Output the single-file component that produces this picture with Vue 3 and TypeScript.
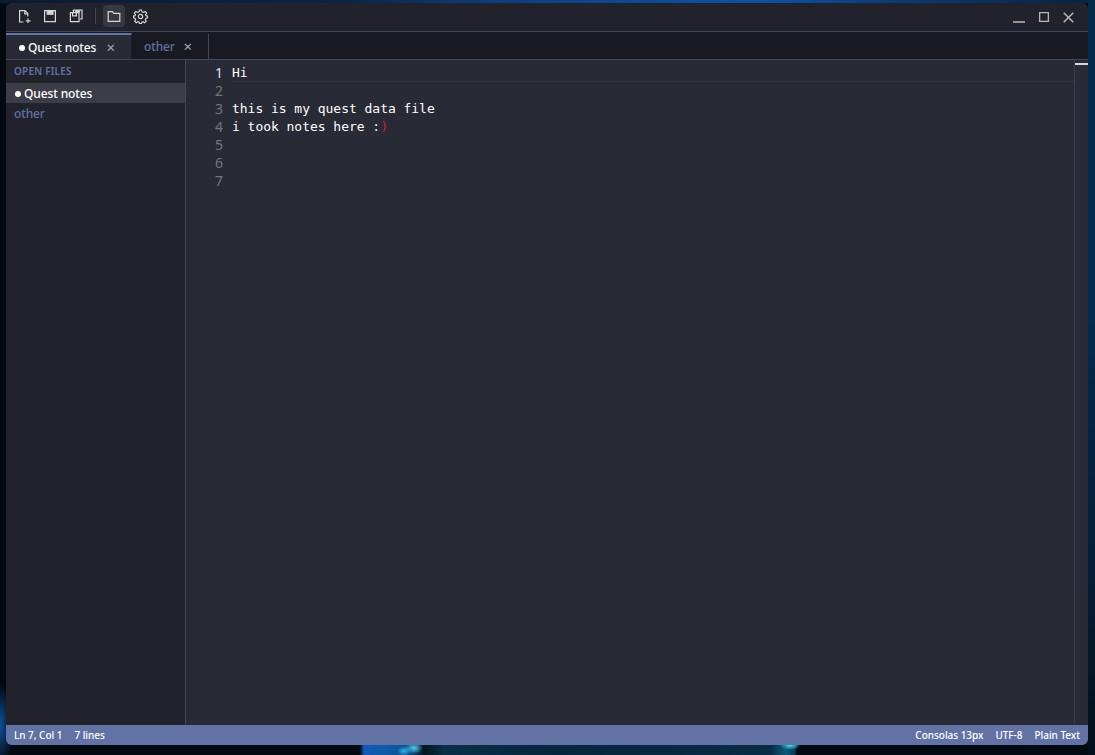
<script setup lang="ts">
const lineNumbers: number[] = [1, 2, 3, 4, 5, 6, 7]
</script>

<template>
  <div class="desktop">
    <div class="window">
      <header class="titlebar">
        <div class="tools">
          <button class="tool" aria-label="New file">
            <svg width="15" height="15" viewBox="0 0 15 15" fill="none" stroke="currentColor" stroke-width="1.2">
              <path d="M6.5 13H2.6V1.6H8L10.8 4.4V7.5M7.8 1.6V4.8H10.8" />
              <path d="M11 9.5V14M8.8 11.8H13.6" />
            </svg>
          </button>
          <button class="tool" aria-label="Save">
            <svg width="14" height="14" viewBox="0 0 14 14" fill="none" stroke="currentColor" stroke-width="1.2">
              <path d="M1.6 1.6H12.4V12.6H1.6Z" />
              <path d="M4.2 1.6V5.2H10V1.6" fill="currentColor" />
            </svg>
          </button>
          <button class="tool" aria-label="Save all">
            <svg width="14" height="14" viewBox="0 0 14 14" fill="none" stroke="currentColor" stroke-width="1.2">
              <path d="M4.4 3.2V1.2H13V10H10.6" />
              <path d="M1.4 3.6H10V12.6H1.4Z" />
              <path d="M3.6 3.6V6.8H7.4V3.6" />
              <path d="M6.8 1.2V3H10.4V1.2" fill="currentColor" />
            </svg>
          </button>
          <span class="divider"></span>
          <button class="tool folder" aria-label="Open folder">
            <svg width="14" height="13" viewBox="0 0 14 13" fill="none" stroke="currentColor" stroke-width="1.2">
              <path d="M1.2 11.4V1.6H5.4L6.9 3.4H12.8V11.4Z" />
            </svg>
          </button>
          <button class="tool" aria-label="Settings">
            <svg width="15" height="15" viewBox="0 0 16 16" fill="none" stroke="currentColor" stroke-width="1.2">
              <circle cx="8" cy="8" r="2.3" />
              <path d="M6.8 1H9.2L9.6 3L11.2 3.7L13 2.6L14.6 4.4L13.3 6L13.8 7.1L15.4 7.5V9.5L13.7 10L13.1 11.3L14.1 13L12.4 14.6L10.7 13.5L9.5 14L9.1 15.4H6.9L6.5 14L5.2 13.5L3.5 14.6L1.8 13L2.9 11.3L2.3 10L0.6 9.5V7.5L2.2 7.1L2.7 6L1.4 4.4L3 2.6L4.8 3.7L6.4 3Z" />
            </svg>
          </button>
        </div>
        <div class="controls">
          <svg width="12" height="12" viewBox="0 0 12 12" stroke="currentColor" stroke-width="1.4"><path d="M0 11H12" /></svg>
          <svg width="10" height="10" viewBox="0 0 10 10" fill="none" stroke="currentColor" stroke-width="1.3"><path d="M.65.65H9.35V9.35H.65Z" /></svg>
          <svg width="11" height="11" viewBox="0 0 11 11" fill="none" stroke="currentColor" stroke-width="1.5"><path d="M.7.7L10.3 10.3M10.3.7L.7 10.3" /></svg>
        </div>
      </header>

      <nav class="tabs">
        <div class="tab active">
          <span class="tab-label"><i class="dot"></i>Quest notes</span>
          <span class="tab-x">×</span>
        </div>
        <div class="tab">
          <span class="tab-label">other</span>
          <span class="tab-x">×</span>
        </div>
      </nav>

      <div class="body">
        <aside class="sidebar">
          <div class="side-title">OPEN FILES</div>
          <div class="side-item current"><i class="dot small"></i>Quest notes</div>
          <div class="side-item">other</div>
        </aside>
        <main class="editor">
          <div class="gutter">
            <div v-for="n in lineNumbers" :key="n" class="ln" :class="{ on: n === 1 }">{{ n }}</div>
          </div>
          <div class="code">
            <div class="cl active-line">Hi</div>
            <div class="cl"></div>
            <div class="cl">this is my quest data file</div>
            <div class="cl">i took notes here :<span class="paren">)</span></div>
            <div class="cl"></div>
            <div class="cl"></div>
            <div class="cl"></div>
          </div>
          <div class="ruler"><span class="mark"></span></div>
        </main>
      </div>

      <footer class="status">
        <div class="group">
          <span>Ln 7, Col 1</span>
          <span>7 lines</span>
        </div>
        <div class="group">
          <span>Consolas 13px</span>
          <span>UTF-8</span>
          <span>Plain Text</span>
        </div>
      </footer>
    </div>
  </div>
</template>

<style>
html, body { margin: 0; background: #03101c; }
</style>

<style scoped>
.desktop {
  box-sizing: border-box;
  width: 1095px;
  height: 755px;
  padding: 3px 7px 10px 6px;
  overflow: hidden;
  font-family: "Noto Sans", sans-serif;
  background-color: #03111f;
  background-image:
    radial-gradient(ellipse 9px 6px at 414px 748px, #4fd0ee 0%, transparent 100%),
    radial-gradient(ellipse 7px 5px at 404px 751px, #2fb8e8 0%, transparent 100%),
    radial-gradient(ellipse 10px 5px at 790px 745px, #58e4e6 0%, #1a8aa8 60%, transparent 100%),
    radial-gradient(ellipse 14px 40px at 0 725px, #0f4f9c 0%, transparent 100%),
    linear-gradient(90deg, #020a10 0 360px, #1458b8 364px, #0f5aa8 385px, #0c4f8a 410px, #04141f 424px, #083048 445px, #06263c 560px, #082c44 770px, #0e5a78 786px, #0a3a52 795px, #020a12 797px, #020a12 100%);
  position: relative;
}
.desktop::before {
  content: "";
  position: absolute;
  inset: 0 0 auto 0;
  height: 3px;
  background: linear-gradient(90deg, #0a1c30 0, #0a2444 340px, #0e3f80 500px, #1050a4 760px, #0c3a74 900px, #08223f 1095px);
}
.desktop::after {
  content: "";
  position: absolute;
  top: 0;
  bottom: 0;
  right: 0;
  width: 7px;
  background: linear-gradient(180deg, #07294a 0, #062a4e 300px, #051c33 600px, #030f1b 755px);
}
.window {
  position: relative;
  z-index: 1;
  height: 100%;
  display: flex;
  flex-direction: column;
  border-radius: 6px;
  overflow: hidden;
  background: #282a36;
}
.titlebar {
  height: 28px;
  flex: none;
  display: flex;
  align-items: center;
  justify-content: space-between;
  background: #21222c;
  border-bottom: 1px solid #44475a;
}
.tools {
  display: flex;
  align-items: center;
  padding: 0 0 2px 7px;
}
.tool {
  all: unset;
  width: 22px;
  height: 22px;
  margin-right: 4px;
  display: flex;
  align-items: center;
  justify-content: center;
  color: #d8d8d8;
}
.divider {
  width: 1px;
  height: 16px;
  margin: 0 7px 0 4px;
  background: #44475a;
}
.folder {
  background: #363741;
  border-radius: 4px;
}
.controls {
  display: flex;
  align-items: center;
  gap: 14px;
  padding-right: 14px;
  color: #b8b8b8;
}
.tabs {
  height: 27px;
  flex: none;
  display: flex;
  background: #191a21;
  border-bottom: 1px solid #44475a;
}
.tab {
  display: flex;
  align-items: center;
  justify-content: space-between;
  box-sizing: border-box;
  padding: 0 16px 0 12px;
  width: 77px;
  margin-top: 2px;
  border-right: 1px solid #44475a;
  color: #6272a4;
  font-size: 12px;
  font-weight: 500;
  letter-spacing: -0.12px;
  gap: 8px;
}
.tab.active {
  width: 126px;
  margin-top: 1px;
  background: #282a36;
  color: #ffffff;
  border-top: 2px solid #6272a4;
  border-right: 1px solid #191a21;
}
.tab-label {
  display: flex;
  align-items: center;
  white-space: nowrap;
}
.tab-x {
  color: #a9a9b0;
  font-size: 15px;
  font-weight: 400;
  line-height: 1;
}
.dot {
  display: inline-block;
  width: 6px;
  height: 6px;
  margin: 1px 3px 0 1px;
  border-radius: 50%;
  background: #ffffff;
}
.body {
  flex: 1;
  min-height: 0;
  display: flex;
}
.sidebar {
  width: 179px;
  flex: none;
  background: #21222c;
  border-right: 1px solid #44475a;
  font-size: 12px;
  font-weight: 500;
  letter-spacing: -0.12px;
}
.side-title {
  height: 23px;
  line-height: 23px;
  padding-left: 8px;
  font-size: 10px;
  font-weight: 600;
  letter-spacing: 0.2px;
  color: #6272a4;
}
.side-item {
  display: flex;
  align-items: center;
  height: 20px;
  padding-left: 8px;
  color: #6272a4;
}
.side-item.current {
  background: #3c3d47;
  color: #ffffff;
}
.editor {
  flex: 1;
  min-width: 0;
  display: flex;
  background: #282a36;
}
.gutter {
  width: 46px;
  flex: none;
  padding-top: 4px;
  box-sizing: border-box;
}
.ln {
  height: 18px;
  line-height: 18px;
  text-align: right;
  padding-right: 9px;
  font-size: 14px;
  color: #75767c;
}
.ln.on {
  color: #dde1ee;
}
.code {
  flex: 1;
  padding-top: 4px;
  font-family: "DejaVu Sans Mono", monospace;
  font-size: 13px;
  letter-spacing: -0.03px;
  color: #ffffff;
}
.cl {
  height: 18px;
  line-height: 18px;
  white-space: pre;
}
.active-line {
  box-sizing: border-box;
  box-shadow: inset 0 -1px 0 #32343f;
}
.paren {
  color: #e01b24;
}
.ruler {
  width: 13px;
  flex: none;
  border-left: 1px solid #383a46;
  position: relative;
}
.mark {
  position: absolute;
  top: 3px;
  left: 0;
  right: 0;
  height: 2px;
  background: #d8d8d8;
}
.status {
  height: 20px;
  flex: none;
  display: flex;
  align-items: center;
  justify-content: space-between;
  padding: 0 8px;
  background: #6272a4;
  color: #ffffff;
  font-size: 10px;
  font-weight: 500;
  letter-spacing: -0.03px;
}
.group {
  display: flex;
  gap: 12px;
}
</style>
